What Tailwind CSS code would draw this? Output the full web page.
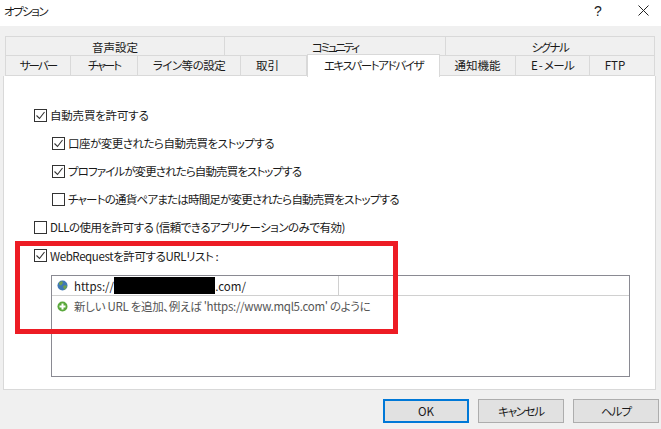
<!DOCTYPE html>
<html lang="ja">
<head>
  <meta charset="UTF-8" />
  <title>オプション</title>
  <script src="https://cdn.jsdelivr.net/npm/@tailwindcss/browser@4"></script>
</head>
<body class="bg-[#f0f0f0] font-['Noto_Sans_CJK_JP','Noto_Sans',sans-serif] [font-feature-settings:'palt'] text-[11.5px] leading-[16px] text-[#1a1a1a]">
  <div class="relative w-[661px] h-[429px] overflow-hidden">

    <!-- title bar -->
    <div class="h-[26px] bg-white flex items-center pl-[4px] pb-[5px]">
      <span class="flex-1 tracking-[-1.5px]">オプション</span>
      <span class="w-[14px] -ml-[2px] text-center font-['Liberation_Sans',sans-serif] text-[14px]">?</span>
      <svg class="ml-[33px] mr-[12px] w-[11px] h-[11px]" viewBox="0 0 11 11" fill="none" stroke="#222" stroke-width="1"><path d="M.5.5l10 10M10.5.5l-10 10" /></svg>
    </div>

    <!-- tabs -->
    <div class="pt-[10px] pl-[5px]">
      <div class="flex w-[650px] h-[20px] text-center leading-[20px] bg-[radial-gradient(#d9d9d9_0.5px,transparent_0.6px)] bg-[length:6px_6px]">
        <div class="w-[220px] border border-[#d9d9d9]">音声設定</div>
        <div class="w-[221px] border-y border-r border-[#d9d9d9] tracking-[-2.2px]">コミュニティ</div>
        <div class="w-[209px] border-y border-r border-[#d9d9d9] tracking-[-1.5px]">シグナル</div>
      </div>
      <div class="flex w-[650px] h-[20px] text-center leading-[19px] bg-[radial-gradient(#d9d9d9_0.5px,transparent_0.6px)] bg-[length:6px_6px]">
        <div class="w-[66px] border-x border-b border-[#d9d9d9] tracking-[-2px]">サーバー</div>
        <div class="w-[67px] border-r border-b border-[#d9d9d9] tracking-[-2px]">チャート</div>
        <div class="w-[103px] border-r border-b border-[#d9d9d9] tracking-[-0.5px]">ライン等の設定</div>
        <div class="w-[66px] border-r border-b border-[#d9d9d9] pr-[12px]">取引</div>
        <div class="relative z-10 -mt-[2px] w-[133px] h-[23px] bg-white border-x border-t border-[#d9d9d9] leading-[20px] tracking-[-1.4px]">エキスパートアドバイザ</div>
        <div class="w-[76px] border-r border-b border-[#d9d9d9]">通知機能</div>
        <div class="w-[74px] border-r border-b border-[#d9d9d9] tracking-[-0.7px]">E - メール</div>
        <div class="w-[65px] border-r border-b border-[#d9d9d9] pr-[14px]">FTP</div>
      </div>
    </div>

    <!-- panel -->
    <div class="ml-[3px] w-[653px] h-[314px] bg-white border border-t-0 border-[#d9d9d9] pl-[30px]">
      <div class="pt-[25px] flex flex-col">
        <label class="h-[28px] flex items-center gap-[3px] tracking-[-0.2px]">
          <span class="w-[13px] h-[13px] border border-[#333] flex items-center justify-center"><svg class="w-[11px] h-[11px]" viewBox="0 0 11 11" fill="none" stroke="#333" stroke-width="1.1"><path d="M1.5 5.5l3 3 5-6.5" /></svg></span>
          自動売買を許可する
        </label>
        <label class="h-[28px] ml-[18px] flex items-center gap-[3px] tracking-[-0.5px]">
          <span class="w-[13px] h-[13px] border border-[#333] flex items-center justify-center"><svg class="w-[11px] h-[11px]" viewBox="0 0 11 11" fill="none" stroke="#333" stroke-width="1.1"><path d="M1.5 5.5l3 3 5-6.5" /></svg></span>
          口座が変更されたら自動売買をストップする
        </label>
        <label class="h-[28px] ml-[18px] flex items-center gap-[3px] tracking-[-0.9px]">
          <span class="w-[13px] h-[13px] border border-[#333] flex items-center justify-center"><svg class="w-[11px] h-[11px]" viewBox="0 0 11 11" fill="none" stroke="#333" stroke-width="1.1"><path d="M1.5 5.5l3 3 5-6.5" /></svg></span>
          プロファイルが変更されたら自動売買をストップする
        </label>
        <label class="h-[28px] ml-[18px] flex items-center gap-[3px] tracking-[-0.8px]">
          <span class="w-[13px] h-[13px] border border-[#333]"></span>
          チャートの通貨ペアまたは時間足が変更されたら自動売買をストップする
        </label>
        <label class="h-[28px] flex items-center gap-[3px] tracking-[-0.5px]">
          <span class="w-[13px] h-[13px] border border-[#333]"></span>
          DLLの使用を許可する (信頼できるアプリケーションのみで有効)
        </label>
        <label class="h-[29px] flex items-center gap-[3px] tracking-[-0.4px]">
          <span class="w-[13px] h-[13px] border border-[#333] flex items-center justify-center"><svg class="w-[11px] h-[11px]" viewBox="0 0 11 11" fill="none" stroke="#333" stroke-width="1.1"><path d="M1.5 5.5l3 3 5-6.5" /></svg></span>
          WebRequestを許可するURLリスト :
        </label>
      </div>

      <!-- url list -->
      <div class="mt-[5px] ml-[17px] w-[579px] h-[102px] border border-[#8a8a92]">
        <div class="h-[20px] flex border-b border-[#d0d0d0]">
          <div class="w-[287px] flex items-center border-r border-[#d0d0d0] pl-[5px]">
            <svg class="w-[11px] h-[11px]" viewBox="0 0 11 11">
              <circle cx="5.5" cy="5.5" r="5" fill="#3f78b5" />
              <path d="M2 2.5l3-1.5 1 2-2 2.5-2-1zM6 6l3-1 1 2-2.5 3-1-2z" fill="#6fa14f" />
            </svg>
            <span class="ml-[6px] flex items-center">https://<span class="w-[101px] h-[17px] bg-black"></span>.com/</span>
          </div>
        </div>
        <div class="h-[20px] flex items-center pl-[5px] text-[#555]">
          <svg class="w-[11px] h-[11px]" viewBox="0 0 11 11">
            <circle cx="5.5" cy="5.5" r="5" fill="#5aa83c" />
            <path d="M5.5 2.5v6M2.5 5.5h6" stroke="#fff" stroke-width="2" />
          </svg>
          <span class="ml-[6px] tracking-[-0.3px]">新しい URL を追加、例えば 'https://www.mql5.com' のように</span>
        </div>
      </div>
    </div>

    <!-- buttons -->
    <div class="flex justify-end gap-[9px] pt-[9px] pr-[2px] text-center leading-[21px]">
      <button class="w-[86px] h-[24px] bg-[#e1e1e1] border-2 border-[#0078d7]">OK</button>
      <button class="w-[86px] h-[24px] bg-[#e1e1e1] border border-[#adadad] tracking-[-1.3px]">キャンセル</button>
      <button class="w-[86px] h-[24px] bg-[#e1e1e1] border border-[#adadad] tracking-[-0.9px]">ヘルプ</button>
    </div>

    <!-- red annotation -->
    <div class="absolute left-[15px] top-[241px] w-[383px] h-[93px] border-[5px] border-[#ed1c24]"></div>
  </div>
</body>
</html>
